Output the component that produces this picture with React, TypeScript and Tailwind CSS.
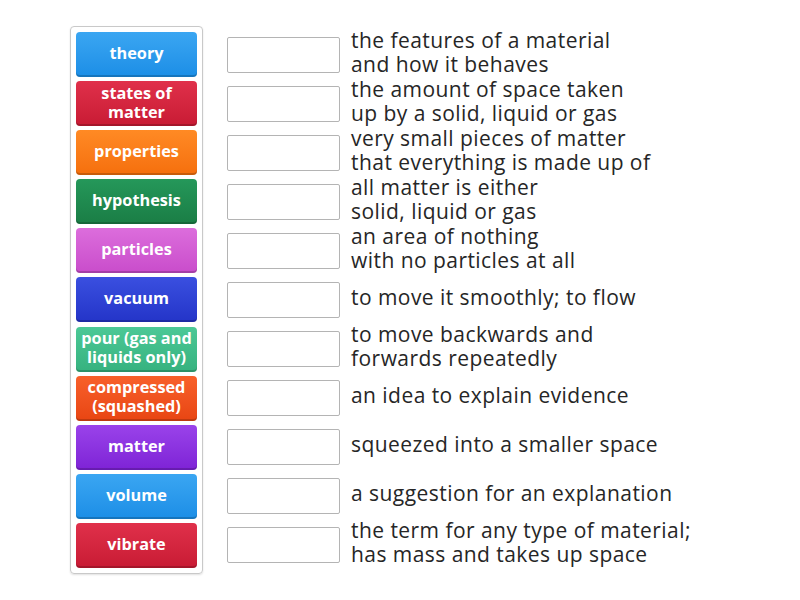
import React from 'react';

type Term = {
    label: string;
    from: string;
    to: string;
};

const terms: Term[] = [
    { label: 'theory', from: 'from-[#3aa6f2]', to: 'to-[#1b8ee6]' },
    { label: 'states of matter', from: 'from-[#e0304a]', to: 'to-[#c81a34]' },
    { label: 'properties', from: 'from-[#ff8a24]', to: 'to-[#f56f0c]' },
    { label: 'hypothesis', from: 'from-[#25985a]', to: 'to-[#1a7d45]' },
    { label: 'particles', from: 'from-[#dc6ddc]', to: 'to-[#c94ccb]' },
    { label: 'vacuum', from: 'from-[#3a4fe0]', to: 'to-[#2434c8]' },
    { label: 'pour (gas and liquids only)', from: 'from-[#4cc896]', to: 'to-[#36b27f]' },
    { label: 'compressed (squashed)', from: 'from-[#f8602a]', to: 'to-[#e84512]' },
    { label: 'matter', from: 'from-[#9a42ea]', to: 'to-[#7e22d6]' },
    { label: 'volume', from: 'from-[#3aa6f2]', to: 'to-[#1b8ee6]' },
    { label: 'vibrate', from: 'from-[#e0304a]', to: 'to-[#c81a34]' },
];

const definitions: string[][] = [
    ['the features of a material', 'and how it behaves'],
    ['the amount of space taken', 'up by a solid, liquid or gas'],
    ['very small pieces of matter', 'that everything is made up of'],
    ['all matter is either', 'solid, liquid or gas'],
    ['an area of nothing', 'with no particles at all'],
    ['to move it smoothly; to flow'],
    ['to move backwards and', 'forwards repeatedly'],
    ['an idea to explain evidence'],
    ['squeezed into a smaller space'],
    ['a suggestion for an explanation'],
    ['the term for any type of material;', 'has mass and takes up space'],
];

const TermButton: React.FC<{ term: Term }> = ({ term }) => (
    <div
        className={`flex h-[45px] w-[121px] items-center justify-center rounded-[4px] bg-gradient-to-b ${term.from} ${term.to} px-0.5 pb-[2px] text-center text-[16.3px] font-bold leading-[19px] text-white shadow-[inset_0_-2px_0_rgba(0,0,0,0.18)]`}
    >
        {term.label}
    </div>
);

export default function App() {
    return (
        <div
            className="flex h-[600px] w-[800px] items-start bg-white"
            style={{ fontFamily: '"Open Sans", "Noto Sans", sans-serif' }}
        >
            <div className="ml-[70px] mt-[26px] flex flex-col gap-[4.1px] rounded-[4px] border border-[#c9c9c9] p-[5px] shadow-[0_1px_2px_rgba(0,0,0,0.12)]">
                {terms.map((term) => (
                    <TermButton key={term.label} term={term} />
                ))}
            </div>

            <div className="ml-[24px] mt-[32px] flex flex-col gap-[4.1px]">
                {definitions.map((lines, i) => (
                    <div key={i} className="flex h-[45px] items-center">
                        <div className="h-[36px] w-[113px] shrink-0 rounded-[2px] border border-[#b4b4b4] bg-white" />
                        <div className="mb-[6px] ml-[11px] text-[21px] leading-[24px] tracking-[0.45px] text-[#262626]">
                            {lines.map((line) => (
                                <div key={line} className="whitespace-nowrap">
                                    {line}
                                </div>
                            ))}
                        </div>
                    </div>
                ))}
            </div>
        </div>
    );
}
